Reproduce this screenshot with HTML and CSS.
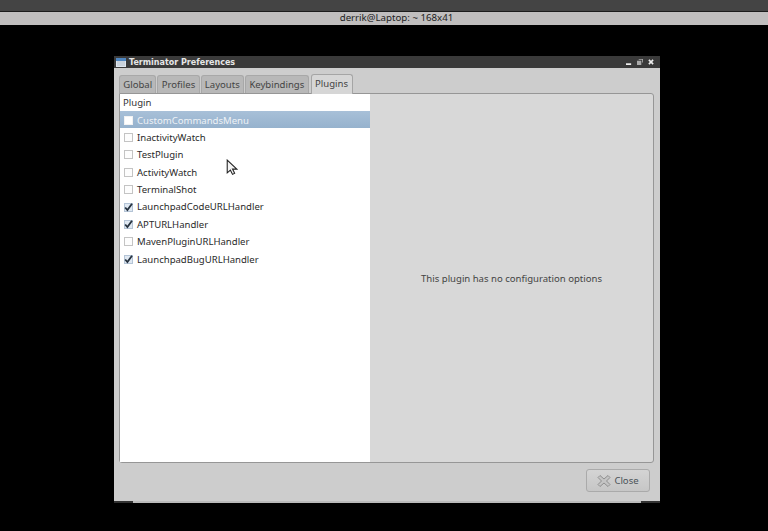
FILE: index.html
```html
<!DOCTYPE html>
<html lang="en">
<head>
<meta charset="utf-8">
<title>Terminator Preferences</title>
<link rel="stylesheet" href="styles.css">
</head>
<body>
<div class="panel"></div>
<div class="term-title">derrik@Laptop: ~ 168x41</div>
<main class="desktop">
  <section class="window">
    <header class="titlebar">
      <svg class="app-icon" viewBox="0 0 10 9"><rect width="10" height="9" fill="#dfe6ee"/><rect width="10" height="3" fill="#4f86c0"/><rect x="1" y="3" width="8" height="5" fill="#c9d2dc"/></svg>
      <span class="win-title">Terminator Preferences</span>
      <div class="win-buttons">
        <svg viewBox="0 0 7 7"><rect x="0" y="5" width="6" height="2" fill="#eee"/></svg>
        <svg viewBox="0 0 7 7"><path d="M2 0h5v4h-1v-3h-4zM0 2h5v5h-5z" fill="#aaa"/></svg>
        <svg viewBox="0 0 7 7"><path d="M1 1l5 5M6 1l-5 5" stroke="#eee" stroke-width="1.8"/></svg>
      </div>
    </header>
    <div class="content">
      <nav class="tabs">
        <span class="tab">Global</span>
        <span class="tab">Profiles</span>
        <span class="tab">Layouts</span>
        <span class="tab">Keybindings</span>
        <span class="tab active">Plugins</span>
      </nav>
      <div class="notebook">
        <div class="list">
          <div class="list-head">Plugin</div>
          <div class="row selected"><span class="check"></span>CustomCommandsMenu</div>
          <div class="row"><span class="check"></span>InactivityWatch</div>
          <div class="row"><span class="check"></span>TestPlugin</div>
          <div class="row"><span class="check"></span>ActivityWatch</div>
          <div class="row"><span class="check"></span>TerminalShot</div>
          <div class="row"><span class="check checked"><svg viewBox="0 0 9 9"><path d="M1.200 4.500l2.200 2.600 4.600-6.400" fill="none" stroke="#26323f" stroke-width="1.800"/></svg></span>LaunchpadCodeURLHandler</div>
          <div class="row"><span class="check checked"><svg viewBox="0 0 9 9"><path d="M1.200 4.500l2.200 2.600 4.600-6.400" fill="none" stroke="#26323f" stroke-width="1.800"/></svg></span>APTURLHandler</div>
          <div class="row"><span class="check"></span>MavenPluginURLHandler</div>
          <div class="row"><span class="check checked"><svg viewBox="0 0 9 9"><path d="M1.200 4.500l2.200 2.600 4.600-6.400" fill="none" stroke="#26323f" stroke-width="1.800"/></svg></span>LaunchpadBugURLHandler</div>
        </div>
        <div class="detail">This plugin has no configuration options</div>
      </div>
      <div class="actions">
        <button class="close-btn">
          <svg viewBox="0 0 14 14"><path d="M3 1.500l4 3.500 4-3.500 2 2-3.500 3.500 3.500 3.500-2 2-4-3.500-4 3.500-2-2 3.500-3.500-3.500-3.500z" fill="#c4c4c4" stroke="#8f8f8f" stroke-width="1"/></svg>
          Close
        </button>
      </div>
    </div>
    <div class="win-bottom"><span class="bottom-dark"></span><span class="bottom-dark"></span></div>
  </section>
  <svg class="cursor" viewBox="0 0 11 16"><path d="M1 1v12l3-2.500 2 4 2-1-2-4h4z" fill="#f4f4f4" stroke="#222" stroke-width="1"/></svg>
</main>
</body>
</html>
```

FILE: styles.css
```css
* { box-sizing: border-box; }
html, body { margin: 0; height: 531px; overflow: hidden; background: #000; }
body { font-family: "Noto Sans", "Open Sans", sans-serif; font-size: 9.55px; color: #2c2c2c; position: relative; }
.panel { height: 12px; background: #444; border-bottom: 1px solid #1c1c1c; }
.term-title { height: 13px; line-height: 12px; background: #c0bebe; color: #222; text-align: center; padding-left: 25px; font-size: 9.7px; }
.desktop { height: 506px; padding: 31px 0 0 114px; }
.window { width: 546px; height: 447px; display: flex; flex-direction: column; background: #cdcdcd; }
.titlebar { height: 12px; flex: none; background: #3a3a3a; display: flex; align-items: center; padding: 0 6px 0 2px; color: #e6e6e6; }
.app-icon { width: 10px; height: 9px; margin-right: 3px; }
.win-title { font-family: "DejaVu Sans", sans-serif; font-size: 8px; font-weight: 700; }
.win-buttons { margin-left: auto; display: flex; gap: 5px; }
.win-buttons svg { width: 6px; height: 6px; display: block; }
.content { flex: 1; padding: 6px 6px 0 5px; display: flex; flex-direction: column; }
.tabs { display: flex; height: 19px; gap: 1px; position: relative; z-index: 1; }
.tab { height: 18px; margin-top: 1px; padding: 0 3.300px; line-height: 17px; background: #b8b8b8; border: 1px solid #a8a8a8; border-bottom: 0; border-radius: 3px 3px 0 0; color: #444; }
.tab.active { height: 20px; margin-top: 0; margin-left: 1px; padding: 0 3.500px; line-height: 18px; background: #d6d6d6; border-color: #a5a5a5; }
.notebook { height: 370px; display: flex; background: #d8d8d8; border: 1px solid #969696; border-radius: 0 3px 3px 3px; }
.list { width: 250px; background: #fff; }
.list-head { height: 17px; line-height: 18px; padding-left: 3px; color: #333; }
.row { height: 17.4px; line-height: 17.4px; display: flex; align-items: center; padding: 1px 0 0 4px; color: #2a2a2a; }
.row.selected { background: linear-gradient(#a8c0d8, #96b2cd); color: #eef2f6; }
.check { width: 9px; height: 9px; margin-right: 4px; border: 1px solid #c4c4c4; background: #fdfdfd; display: block; position: relative; }
.check svg { position: absolute; left: -1px; top: -1px; width: 9px; height: 9px; display: block; }
.check.checked { border-color: #b4c4d6; background: #dfe8f2; }
.selected .check { border-color: #f2f2f2; background: #fff; }
.detail { flex: 1; display: flex; align-items: center; justify-content: center; color: #444; }
.actions { display: flex; justify-content: flex-end; padding: 6px 4px 0 0; }
.close-btn { width: 64px; height: 23px; display: flex; align-items: center; gap: 3px; justify-content: center; padding: 0; font: inherit; color: #4a5258; background: linear-gradient(#d4d4d4, #c6c6c6); border: 1px solid #aaa; border-radius: 3px; }
.close-btn svg { width: 14px; height: 14px; }
.win-bottom { height: 2px; flex: none; background: #bbb; display: flex; justify-content: space-between; }
.bottom-dark { display: block; width: 19px; height: 2px; background: #333; }
.cursor { position: absolute; left: 226px; top: 159px; width: 12px; height: 17px; }
```
